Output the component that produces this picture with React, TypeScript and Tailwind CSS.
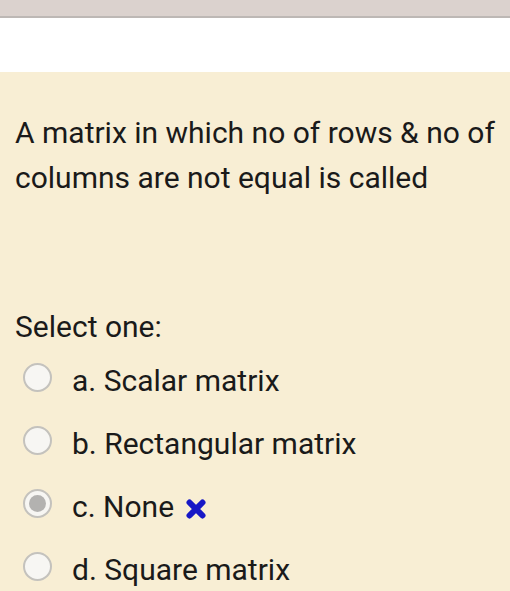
import React from "react";

function Radio({ checked }: { checked?: boolean }) {
  return (
    <div className="w-[29px] h-[29px] rounded-full border-[2px] border-[#c4c2bd] bg-[#f7f6f3] flex items-center justify-center shrink-0">
      {checked && <div className="w-[17px] h-[17px] rounded-full bg-[#b3b2b0]" />}
    </div>
  );
}

function Cross() {
  return (
    <svg width="20" height="20" viewBox="0 0 20 20" className="ml-[12px] mt-[10px]">
      <path d="M3.5 3.5 L16.5 16.5 M16.5 3.5 L3.5 16.5" stroke="#1717c6" strokeWidth="6" strokeLinecap="round" />
    </svg>
  );
}

export default function App() {
  const opts = [
    { t: "a. Scalar matrix" },
    { t: "b. Rectangular matrix" },
    { t: "c. None", checked: true, wrong: true },
    { t: "d. Square matrix" },
  ];
  return (
    <div className="w-[510px] h-[591px] overflow-hidden flex flex-col" style={{ fontFamily: "Roboto, 'Noto Sans', sans-serif" }}>
      <div className="h-[16px] bg-[#dbd2ce] border-b-[2px] border-[#bdb8b5] shrink-0 box-content" />
      <div className="h-[54px] bg-white shrink-0" />
      <div className="flex-1 bg-[#f8eed4] text-[#1a1a1a] px-[15px] pt-[38px]">
        <p className="text-[30px] leading-[45px]">A matrix in which no of rows &amp; no of columns are not equal is called</p>
        <p className="text-[30px] leading-[45px] mt-[104px]">Select one:</p>
        <div className="flex flex-col mt-[-3px]">
          {opts.map((o) => (
            <div key={o.t} className="h-[63px] flex items-center">
              <div className="w-[57px] flex pl-[8px]">
                <Radio checked={o.checked} />
              </div>
              <span className="text-[30px] pt-[6px]">{o.t}</span>
              {o.wrong && <Cross />}
            </div>
          ))}
        </div>
      </div>
    </div>
  );
}
